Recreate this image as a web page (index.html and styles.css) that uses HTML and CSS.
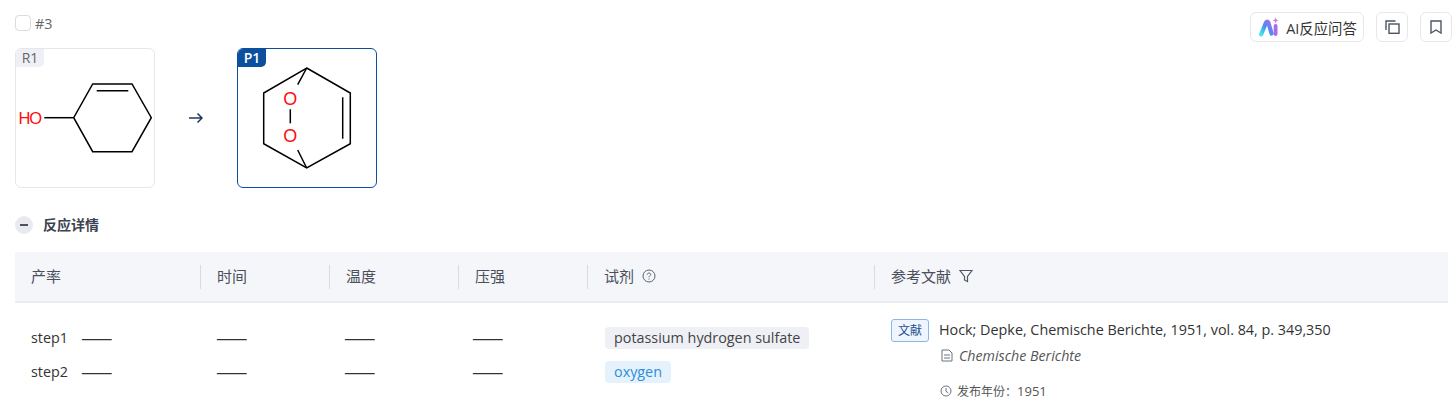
FILE: index.html
```html
<!DOCTYPE html>
<html lang="zh-CN">
<head>
    <meta charset="UTF-8">
    <meta name="viewport" content="width=device-width, initial-scale=1.0">
    <title>反应详情</title>
    <link rel="stylesheet" href="styles.css">
</head>
<body>
    <div class="reaction">
        <!-- Top row -->
        <div class="top-row">
            <label class="select-box">
                <span class="checkbox"></span>
                <span class="index">#3</span>
            </label>
            <div class="actions">
                <button class="action-btn ai-btn">
                    <svg class="ai-logo" width="20" height="20" viewBox="0 0 20 20" fill="none">
                        <defs>
                            <linearGradient id="aiGrad" x1="0" y1="1" x2="1" y2="0">
                                <stop offset="0" stop-color="#3fe6e6"/>
                                <stop offset="0.5" stop-color="#4a8cf5"/>
                                <stop offset="1" stop-color="#b46ae8"/>
                            </linearGradient>
                        </defs>
                        <path d="M2.2 17.2 L7 5.6 Q8.2 3.6 9.4 5.6 L12.6 16.6" stroke="url(#aiGrad)" stroke-width="4.2" stroke-linecap="round" stroke-linejoin="round"/>
                        <path d="M16.6 8.8 V17" stroke="#a66cec" stroke-width="3.8" stroke-linecap="round"/>
                        <path d="M16.6 0.4 L17.4 2.6 L19.4 3.4 L17.4 4.2 L16.6 6.4 L15.8 4.2 L13.8 3.4 L15.8 2.6 Z" fill="#c77bea"/>
                    </svg>
                    <span>AI反应问答</span>
                </button>
                <button class="action-btn icon-btn">
                    <svg width="15" height="14" viewBox="0 0 15 14" fill="none" stroke="#4d5564" stroke-width="1.4">
                        <path d="M1 10 V1 H10.5"/>
                        <rect x="4" y="4" width="10" height="9.3"/>
                    </svg>
                </button>
                <button class="action-btn icon-btn">
                    <svg width="12" height="14" viewBox="0 0 12 14" fill="none" stroke="#4d5564" stroke-width="1.4">
                        <path d="M1 1 H11 V13 L6 10 L1 13 Z"/>
                    </svg>
                </button>
            </div>
        </div>

        <!-- Structures -->
        <div class="scheme">
            <div class="mol-card">
                <span class="mol-tag">R1</span>
                <svg class="mol" viewBox="1 1 138 138" fill="none" stroke="#000" stroke-width="1.5">
                    <path d="M77.7 36 H117 L136.3 69.7 L117 103.7 H77.7 L58.7 69.7 Z"/>
                    <path d="M81.7 42.7 H113.3"/>
                    <path d="M29.3 69.7 H58.7"/>
                    <text class="atom ho" x="3.5" y="75.5">HO</text>
                </svg>
            </div>
            <svg class="arrow" width="16" height="12" viewBox="0 0 16 12" fill="none" stroke="#1f3a5f" stroke-width="1.5">
                <path d="M1 6 H14 M9.5 1.5 L14 6 L9.5 10.5"/>
            </svg>
            <div class="mol-card product">
                <span class="mol-tag">P1</span>
                <svg class="mol" viewBox="1 1 138 138" fill="none" stroke="#000" stroke-width="1.5">
                    <path d="M69.7 20 L113.3 45 V95.7 L69.7 120 L26.7 95.7 V45 Z"/>
                    <path d="M105.7 49.3 V90.7"/>
                    <path d="M53.3 61.3 V75.3"/>
                    <path d="M69.7 20 L60.7 36.7 M69.7 120 L60.7 102"/>
                    <text class="atom" x="53.3" y="57" text-anchor="middle">O</text>
                    <text class="atom" x="53.3" y="93.6" text-anchor="middle">O</text>
                </svg>
            </div>
        </div>

        <!-- Details -->
        <div class="details-title">
            <span class="collapse-btn"><i></i></span>
            <span class="details-text">反应详情</span>
        </div>

        <div class="table-head">
            <div class="th first">产率</div>
            <div class="th">时间</div>
            <div class="th">温度</div>
            <div class="th">压强</div>
            <div class="th">试剂
                <svg width="14" height="14" viewBox="0 0 14 14" fill="none" stroke="#5b6270" stroke-width="1">
                    <circle cx="7" cy="7" r="6"/>
                    <path d="M5.3 5.6 C5.3 3.6 8.7 3.6 8.7 5.5 C8.7 6.8 7 6.8 7 8.3"/>
                    <path d="M7 9.6 V10.6"/>
                </svg>
            </div>
            <div class="th">参考文献
                <svg width="14" height="14" viewBox="0 0 14 14" fill="none" stroke="#4f5868" stroke-width="1.2">
                    <path d="M1 1.5 H13 L8.5 7.5 V12.5 L5.5 11 V7.5 Z"/>
                </svg>
            </div>
        </div>

        <div class="table-body">
            <div class="steps">
                <div class="step"><span class="step-name">step1</span><span class="dash">——</span></div>
                <div class="step"><span class="step-name">step2</span><span class="dash">——</span></div>
            </div>
            <div class="steps">
                <div class="step"><span class="dash">——</span></div>
                <div class="step"><span class="dash">——</span></div>
            </div>
            <div class="steps">
                <div class="step"><span class="dash">——</span></div>
                <div class="step"><span class="dash">——</span></div>
            </div>
            <div class="steps">
                <div class="step"><span class="dash">——</span></div>
                <div class="step"><span class="dash">——</span></div>
            </div>
            <div class="steps">
                <div class="step"><span class="reagent">potassium hydrogen sulfate</span></div>
                <div class="step"><span class="reagent blue">oxygen</span></div>
            </div>
            <div class="ref">
                <div class="ref-title">
                    <span class="ref-tag">文献</span>
                    <span class="ref-text">Hock; Depke, Chemische Berichte, 1951, vol. 84, p. 349,350</span>
                </div>
                <div class="ref-journal">
                    <svg width="12" height="13" viewBox="0 0 12 13" fill="none" stroke="#6b7280" stroke-width="1">
                        <path d="M1 1 H8 L11 4 V12 H1 Z"/>
                        <path d="M3 6 H9 M3 9 H9"/>
                    </svg>
                    <span>Chemische Berichte</span>
                </div>
                <div class="ref-year">
                    <svg width="12" height="12" viewBox="0 0 12 12" fill="none" stroke="#6b7280" stroke-width="1">
                        <circle cx="6" cy="6" r="5"/>
                        <path d="M6 3 V6.3 L8.2 7.8"/>
                    </svg>
                    <span>发布年份：<span class="year">1951</span></span>
                </div>
            </div>
        </div>
    </div>
</body>
</html>
```

FILE: styles.css
```css
/* General styles */
html, body {
    margin: 0;
    padding: 0;
    height: 411px;
    overflow: hidden;
}

body {
    font-family: 'Open Sans', 'Noto Sans CJK SC', sans-serif;
    font-size: 14.35px;
    color: #333;
    background-color: #fff;
}

.reaction {
    padding: 12px 4px 0 15px;
}

/* Top row */
.top-row {
    display: flex;
    justify-content: space-between;
    height: 36px;
}

.select-box {
    display: flex;
    align-items: center;
    gap: 4px;
    height: 22px;
    color: #666;
}

.checkbox {
    width: 16px;
    height: 16px;
    box-sizing: border-box;
    border: 1px solid #d9dbe0;
    border-radius: 4px;
}

.actions {
    display: flex;
    gap: 12px;
}

.action-btn {
    display: flex;
    align-items: center;
    justify-content: center;
    height: 30px;
    padding: 0;
    box-sizing: border-box;
    border: 1px solid #e6e7eb;
    border-radius: 6px;
    background-color: #fff;
    font-family: inherit;
    font-size: 14.4px;
    color: #333;
}

.ai-btn {
    width: 114px;
    gap: 7px;
    padding-left: 2px;
}

.icon-btn {
    width: 32px;
}

/* Structures */
.scheme {
    display: flex;
    align-items: center;
}

.mol-card {
    position: relative;
    width: 140px;
    height: 140px;
    box-sizing: border-box;
    border: 1px solid #e6e7eb;
    border-radius: 6px;
}

.mol-card.product {
    border-color: #0b4f9e;
}

.mol-tag {
    position: absolute;
    top: 0;
    left: 0;
    width: 28px;
    height: 18px;
    line-height: 18px;
    text-align: center;
    font-size: 14px;
    color: #666;
    background-color: #eef0f6;
    border-radius: 5px 0 5px 0;
}

.product .mol-tag {
    color: #fff;
    font-weight: 600;
    background-color: #0b4f9e;
}

.mol {
    display: block;
    width: 100%;
    height: 100%;
}

.atom {
    font-family: 'Liberation Sans', sans-serif;
    font-size: 18px;
    fill: #ff0d0d;
    stroke: none;
}

.atom.ho {
    font-size: 16.5px;
    letter-spacing: -1.2px;
}

.arrow {
    margin: 0 33px;
}

/* Details */
.details-title {
    display: flex;
    align-items: center;
    gap: 10px;
    height: 18px;
    margin-top: 28px;
    font-size: 14px;
    font-weight: 700;
    color: #3d4350;
}

.details-text {
    margin-top: -2px;
}

.collapse-btn {
    display: flex;
    align-items: center;
    justify-content: center;
    width: 18px;
    height: 18px;
    border-radius: 50%;
    background-color: #e8eaef;
}

.collapse-btn i {
    width: 8px;
    height: 2px;
    background-color: #4b5160;
}

.table-head {
    display: grid;
    grid-template-columns: 185px 129px 129px 129px 287px 1fr;
    align-items: center;
    height: 51px;
    margin-top: 18px;
    margin-right: 4px;
    box-sizing: border-box;
    background-color: #f5f6fa;
    border-bottom: 2px solid #ebecf0;
}

.th {
    display: flex;
    align-items: center;
    gap: 8px;
    height: 24px;
    box-sizing: border-box;
    padding-left: 16px;
    padding-bottom: 2px;
    border-left: 1px solid #d9dbe0;
    font-size: 15px;
    color: #4a4f5a;
}

.th.first {
    border-left: none;
}

.table-body {
    display: grid;
    grid-template-columns: 202px 128px 128px 132px 286px 1fr;
    padding-top: 16px;
}

.step {
    display: flex;
    align-items: center;
    height: 22px;
    margin-top: 8px;
    margin-bottom: 12px;
    color: #333;
}

.steps:first-child {
    padding-left: 16px;
}

.step-name {
    width: 51px;
    margin-top: -1px;
}

.dash {
    font-family: 'Noto Sans CJK SC', sans-serif;
    font-size: 18.8px;
    line-height: 22px;
    margin-left: -1px;
    margin-top: -2px;
}

.reagent {
    padding: 0 9px;
    height: 22px;
    line-height: 22px;
    border-radius: 4px;
    background-color: #eef0f6;
    color: #444;
}

.reagent.blue {
    background-color: #e6f2fb;
    color: #2a8fdc;
}

.ref-title {
    display: flex;
    align-items: center;
    gap: 10px;
}

.ref-text {
    margin-top: -2px;
}

.ref-tag {
    width: 38px;
    height: 23px;
    line-height: 21px;
    box-sizing: border-box;
    text-align: center;
    font-size: 12px;
    color: #1d4f91;
    background-color: #eef5fc;
    border: 1px solid #8db6e4;
    border-radius: 3px;
}

.ref-journal {
    display: flex;
    align-items: center;
    gap: 6px;
    margin-top: 4px;
    padding-left: 50px;
    font-size: 14.2px;
    font-style: italic;
    color: #555;
}

.ref-year {
    display: flex;
    align-items: center;
    gap: 5px;
    margin-top: 17px;
    padding-left: 49px;
    font-size: 12px;
    color: #555;
}

.year {
    font-size: 13px;
}
```
